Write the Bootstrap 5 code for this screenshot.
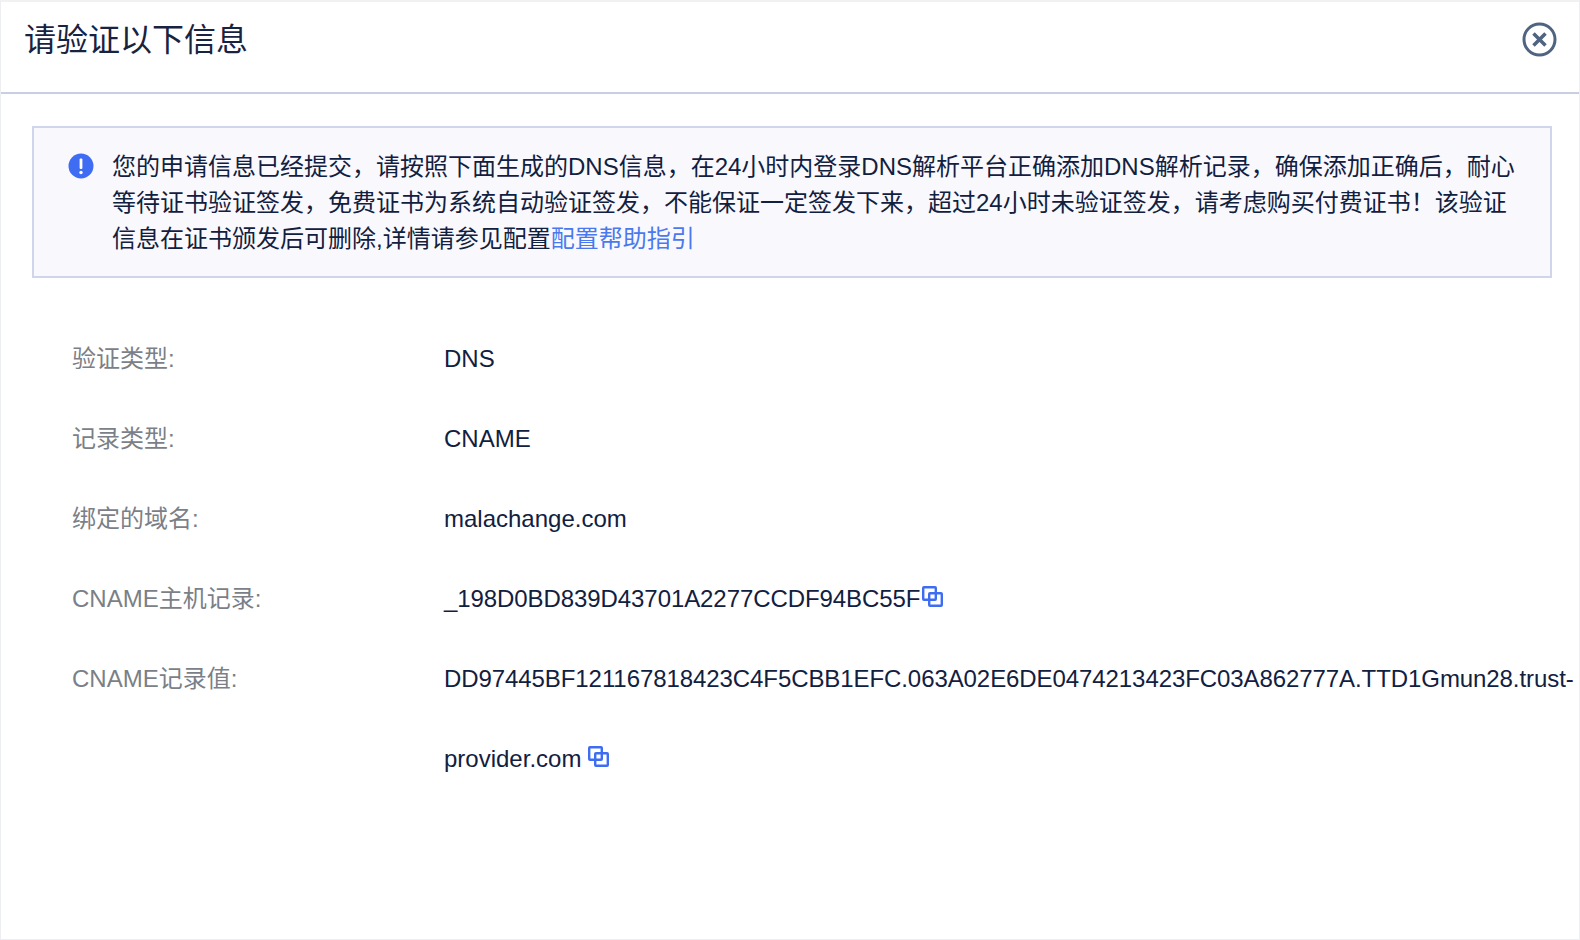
<!DOCTYPE html>
<html lang="zh"><head><meta charset="utf-8">
<link href="https://cdn.jsdelivr.net/npm/bootstrap@5.3.0/dist/css/bootstrap.min.css" rel="stylesheet">
<style>
html,body{height:100%}
body{font-family:"Liberation Sans","Noto Sans CJK SC",sans-serif;color:#12203f;background:#fff;overflow:hidden}
.dlg{height:940px;border:1px solid #eceef2;border-top:2px solid #f0f1f3}
.dlg-head{height:92px;border-bottom:2px solid #c8cfe2;padding:0 22px 0 23px}
.dlg-title{font-size:32px;font-weight:400;line-height:1;margin:0 0 14px;color:#17233f}
.close-ic{margin-bottom:15px}
.dlg-body{padding:32px 27px 0 31px}
.notice{background:#f9f9fd;border:2px solid #d0d5ec;height:152px;padding:21px 30px 0 34px;font-size:24px;line-height:36px;gap:18px}
.notice a{color:#4a78ee;text-decoration:none}
.info-rows{padding:41px 0 0 40px;font-size:24px;line-height:80px}
.lbl{width:372px;color:#7b7f87;flex:none}
.val{color:#12203f;word-break:break-word;margin-right:-28px}
.hashv{letter-spacing:-.08px}
.cp{vertical-align:0;margin-left:2px}
.cp-wide{margin-left:7px}
</style></head><body>
<div class="dlg">
<div class="dlg-head d-flex align-items-center justify-content-between">
<h5 class="dlg-title">请验证以下信息</h5>
<svg width="35" height="35" viewBox="0 0 35 35" class="close-ic" fill="none" stroke="#4f6480" stroke-width="3"><circle cx="17.500" cy="17.500" r="15.500"/><path d="M11.500 11.500L23.500 23.500M23.500 11.500L11.500 23.500" stroke-width="3.500"/></svg>
</div>
<div class="dlg-body">
<div class="notice d-flex">
<svg class="flex-shrink-0 mt-1" width="26" height="26" viewBox="0 0 26 26"><circle cx="13" cy="13" r="12.500" fill="#3e6cf2"/><rect x="11.600" y="5.500" width="2.800" height="10.500" rx="1" fill="#fff"/><circle cx="13" cy="19.500" r="1.700" fill="#fff"/></svg>
<div>您的申请信息已经提交，请按照下面生成的DNS信息，在24小时内登录DNS解析平台正确添加DNS解析记录，确保添加正确后，耐心等待证书验证签发，免费证书为系统自动验证签发，不能保证一定签发下来，超过24小时未验证签发，请考虑购买付费证书！该验证信息在证书颁发后可删除,详情请参见配置<a href="#">配置帮助指引</a></div>
</div>
<div class="info-rows">
<div class="d-flex"><div class="lbl">验证类型:</div><div class="val">DNS</div></div>
<div class="d-flex"><div class="lbl">记录类型:</div><div class="val">CNAME</div></div>
<div class="d-flex"><div class="lbl">绑定的域名:</div><div class="val">malachange.com</div></div>
<div class="d-flex"><div class="lbl">CNAME主机记录:</div><div class="val"><span class="hashv">_198D0BD839D43701A2277CCDF94BC55F</span><svg class="cp" width="21" height="21" viewBox="0 0 21 21" fill="none" stroke="#3e6cf2" stroke-width="2.400"><rect x="1.200" y="1.200" width="12.600" height="12.600" rx=".8"/><rect x="7.200" y="7.200" width="12.600" height="12.600" rx=".8"/></svg></div></div>
<div class="d-flex"><div class="lbl">CNAME记录值:</div><div class="val"><span class="hashv">DD97445BF121167818423C4F5CBB1EFC.063A02E6DE0474213423FC03A862777A.TTD1Gmun28.trust-</span><wbr>provider.com<svg class="cp cp-wide" width="21" height="21" viewBox="0 0 21 21" fill="none" stroke="#3e6cf2" stroke-width="2.400"><rect x="1.200" y="1.200" width="12.600" height="12.600" rx=".8"/><rect x="7.200" y="7.200" width="12.600" height="12.600" rx=".8"/></svg></div></div>
</div>
</div>
</div>
</body></html>
